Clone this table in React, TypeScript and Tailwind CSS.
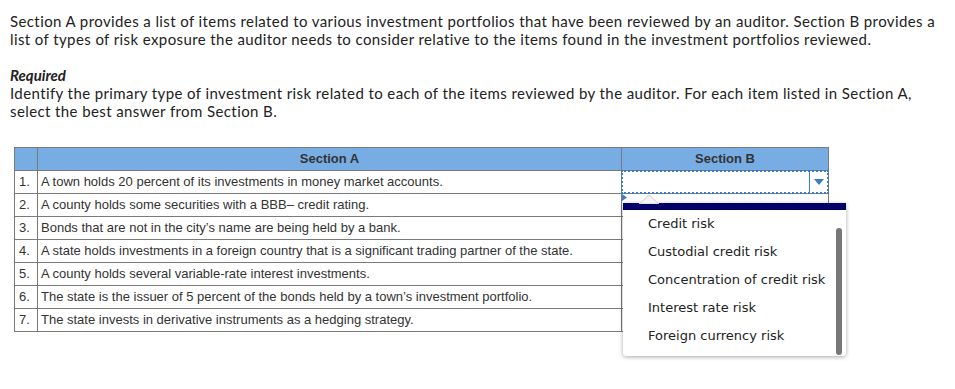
const itemsA = [
  'A town holds 20 percent of its investments in money market accounts.',
  'A county holds some securities with a BBB– credit rating.',
  'Bonds that are not in the city’s name are being held by a bank.',
  'A state holds investments in a foreign country that is a significant trading partner of the state.',
  'A county holds several variable-rate interest investments.',
  'The state is the issuer of 5 percent of the bonds held by a town’s investment portfolio.',
  'The state invests in derivative instruments as a hedging strategy.',
];

const itemsB = [
  'Credit risk',
  'Custodial credit risk',
  'Concentration of credit risk',
  'Interest rate risk',
  'Foreign currency risk',
];

const cell = 'border border-[#7a7a7a] h-[23px] p-0';

function Dropdown() {
  return (
    <div className="absolute left-[623px] top-[203px] w-[223px] h-[153px] bg-white rounded-b-[3px] shadow-[0_1px_4px_rgba(0,0,0,0.35)]">
      {/* little pointer above the list */}
      <svg className="absolute left-[16px] top-[-9px]" width="20" height="10" viewBox="0 0 20 10">
        <path d="M0 10 L10 1 L20 10 Z" fill="#f4f4f4" stroke="#cfcfcf" strokeWidth="1" />
      </svg>
      <div className="h-[7px] bg-[#020066]" />
      <ul className="font-['DejaVu_Sans',Verdana,sans-serif] text-[13px] text-[#222]">
        {itemsB.map((t) => (
          <li key={t} className="h-[28px] leading-[28px] pl-[25px]">
            {t}
          </li>
        ))}
      </ul>
      <div className="absolute right-[4px] top-[25px] w-[6px] h-[127px] rounded-full bg-[#777]" />
    </div>
  );
}

export default function App() {
  return (
    <div className="relative w-[955px] h-[389px] bg-white text-[#222]">
      <div className="pl-[10px] pt-[12px] pr-[8px] font-['Lato',sans-serif] text-[15px] leading-[18px] tracking-[0.4px]">
        <p>
          Section A provides a list of items related to various investment portfolios that have been reviewed by an
          auditor. Section B provides a list of types of risk exposure the auditor needs to consider relative to the
          items found in the investment portfolios reviewed.
        </p>
        <p className="mt-[18px] font-bold italic tracking-normal">Required</p>
        <p>
          Identify the primary type of investment risk related to each of the items reviewed by the auditor. For each
          item listed in Section A, select the best answer from Section B.
        </p>
      </div>

      <table className="ml-[14px] mt-[27px] border-collapse font-['Liberation_Sans',Arial,sans-serif] text-[13px] text-[#333]">
        <thead>
          <tr className="bg-[#78ade3]">
            <th className={`${cell} w-[23px]`} />
            <th className={`${cell} w-[584px] text-center font-bold`}>Section A</th>
            <th className={`${cell} w-[207px] text-center font-bold`}>Section B</th>
          </tr>
        </thead>
        <tbody>
          {itemsA.map((t, i) => (
            <tr key={i}>
              <td className={`${cell} pl-[4px]`}>{i + 1}.</td>
              <td className={`${cell} pl-[3px]`}>{t}</td>
              <td className={`${cell} relative`}>
                {i === 0 && (
                  <div className="absolute inset-[-1px] border-2 border-dotted border-[#3b7cc6] flex justify-end">
                    <div className="w-[18px] border-l border-[#3b7cc6] flex items-center justify-center">
                      <svg width="10" height="6" viewBox="0 0 10 6">
                        <path d="M0 0 L10 0 L5 6 Z" fill="#3b7cc6" />
                      </svg>
                    </div>
                  </div>
                )}
              </td>
            </tr>
          ))}
        </tbody>
      </table>

      <svg className="absolute left-[622px] top-[194px]" width="5" height="7" viewBox="0 0 5 7">
        <path d="M0 0 L5 3.5 L0 7 Z" fill="#3b7cc6" />
      </svg>
      <Dropdown />
    </div>
  );
}
